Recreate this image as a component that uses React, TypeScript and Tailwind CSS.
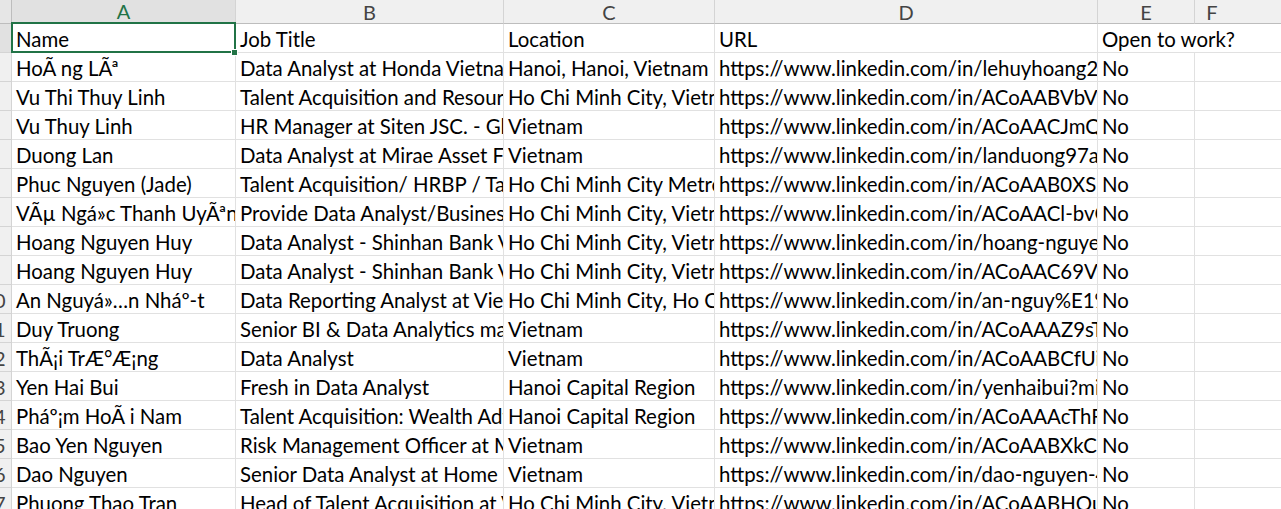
type Row = [string, string, string, string, string];

const cols = [
  { key: "A", w: "w-[224px]" },
  { key: "B", w: "w-[268px]" },
  { key: "C", w: "w-[211px]" },
  { key: "D", w: "w-[383px]" },
  { key: "E", w: "w-[97px]" },
];

const li = "https://www.linkedin.com/in/";

const rows: Row[] = [
  ["Name", "Job Title", "Location", "URL", "Open to work?"],
  ["HoÃ\u00a0ng LÃª", "Data Analyst at Honda Vietnam", "Hanoi, Hanoi, Vietnam", li + "lehuyhoang2000", "No"],
  ["Vu Thi Thuy Linh", "Talent Acquisition and Resource Management", "Ho Chi Minh City, Vietnam", li + "ACoAABVbVxYB", "No"],
  ["Vu Thuy Linh", "HR Manager at Siten JSC. - Global", "Vietnam", li + "ACoAACJmQ2k", "No"],
  ["Duong Lan", "Data Analyst at Mirae Asset Finance", "Vietnam", li + "landuong97a", "No"],
  ["Phuc Nguyen (Jade)", "Talent Acquisition/ HRBP / Talent Management", "Ho Chi Minh City Metropolitan Area", li + "ACoAAB0XSmE", "No"],
  ["VÃµ Ngá»c Thanh UyÃªn", "Provide Data Analyst/Business Intelligence", "Ho Chi Minh City, Vietnam", li + "ACoAACl-bvQ", "No"],
  ["Hoang Nguyen Huy", "Data Analyst - Shinhan Bank Vietnam", "Ho Chi Minh City, Vietnam", li + "hoang-nguyen-huy", "No"],
  ["Hoang Nguyen Huy", "Data Analyst - Shinhan Bank Vietnam", "Ho Chi Minh City, Vietnam", li + "ACoAAC69VwU", "No"],
  ["An Nguyá»…n Nháº-t", "Data Reporting Analyst at Vietnam International Bank", "Ho Chi Minh City, Ho Chi Minh City, Vietnam", li + "an-nguy%E1%BB%85n", "No"],
  ["Duy Truong", "Senior BI & Data Analytics manager", "Vietnam", li + "ACoAAAZ9sTo", "No"],
  ["ThÃ¡i TrÆ°Æ¡ng", "Data Analyst", "Vietnam", li + "ACoAABCfUiM", "No"],
  ["Yen Hai Bui", "Fresh in Data Analyst", "Hanoi Capital Region", li + "yenhaibui?miniProfile", "No"],
  ["Pháº¡m HoÃ\u00a0i Nam", "Talent Acquisition: Wealth Advisory", "Hanoi Capital Region", li + "ACoAAAcThRk", "No"],
  ["Bao Yen Nguyen", "Risk Management Officer at MB Bank", "Vietnam", li + "ACoAABXkCq0", "No"],
  ["Dao Nguyen", "Senior Data Analyst at Home Credit", "Vietnam", li + "dao-nguyen-4b", "No"],
  ["Phuong Thao Tran", "Head of Talent Acquisition at VNG", "Ho Chi Minh City, Vietnam", li + "ACoAABHOu8c", "No"],
];

export default function App() {
  return (
    <div className="relative w-[1281px] h-[509px] overflow-hidden bg-white font-['Lato',sans-serif] text-[20.4px] text-black">
      {/* column letters */}
      <div className="flex h-[24px] text-[20px]">
        <div className="w-[12px] shrink-0 bg-[#e6e6e6] border-r border-b border-[#bdbdbd]" />
        {cols.map((c, i) => (
          <div
            key={c.key}
            className={
              i === 0
                ? `${c.w} shrink-0 flex items-center justify-center bg-[#e1e1e1] border-r border-[#d4d4d4] border-b-2 border-b-[#217346] text-[#217346]`
                : `${c.w} shrink-0 flex items-center justify-center bg-[#f0f0f0] border-r border-[#d4d4d4] border-b border-b-[#bdbdbd] text-[#444]`
            }
          >
            {c.key}
          </div>
        ))}
        <div className="flex-1 flex items-center justify-center pr-[52px] bg-[#f0f0f0] border-b border-[#bdbdbd] text-[#444]">F</div>
      </div>

      {rows.map((r, ri) => (
        <div key={ri} className="flex h-[29px]">
          <div
            className={`w-[12px] shrink-0 overflow-hidden border-r border-b border-[#d4d4d4] text-[20px] ${
              ri === 0 ? "bg-[#e1e1e1]" : "bg-[#f0f0f0]"
            }`}
          >
            <div className="w-[24px] ml-[-18px] h-full flex items-center justify-center pt-[2px] text-[#444]">{ri + 1}</div>
          </div>
          {r.map((v, ci) => {
            const spill = ri === 0 && ci === 4;
            return (
              <div
                key={ci}
                className={`${cols[ci].w} shrink-0 flex items-center whitespace-nowrap pl-[4px] pt-[2px] border-b border-[#e1e1e1] ${
                  spill ? "overflow-visible" : "overflow-hidden border-r"
                }`}
              >
                {v}
              </div>
            );
          })}
          <div className="flex-1 border-b border-[#e1e1e1]" />
        </div>
      ))}

      {/* active cell A1 */}
      <div className="absolute left-[11px] top-[22px] w-[225px] h-[31px] border-2 border-[#217346]" />
      <div className="absolute left-[231px] top-[49px] w-[7px] h-[7px] bg-[#217346] border border-white" />
    </div>
  );
}
